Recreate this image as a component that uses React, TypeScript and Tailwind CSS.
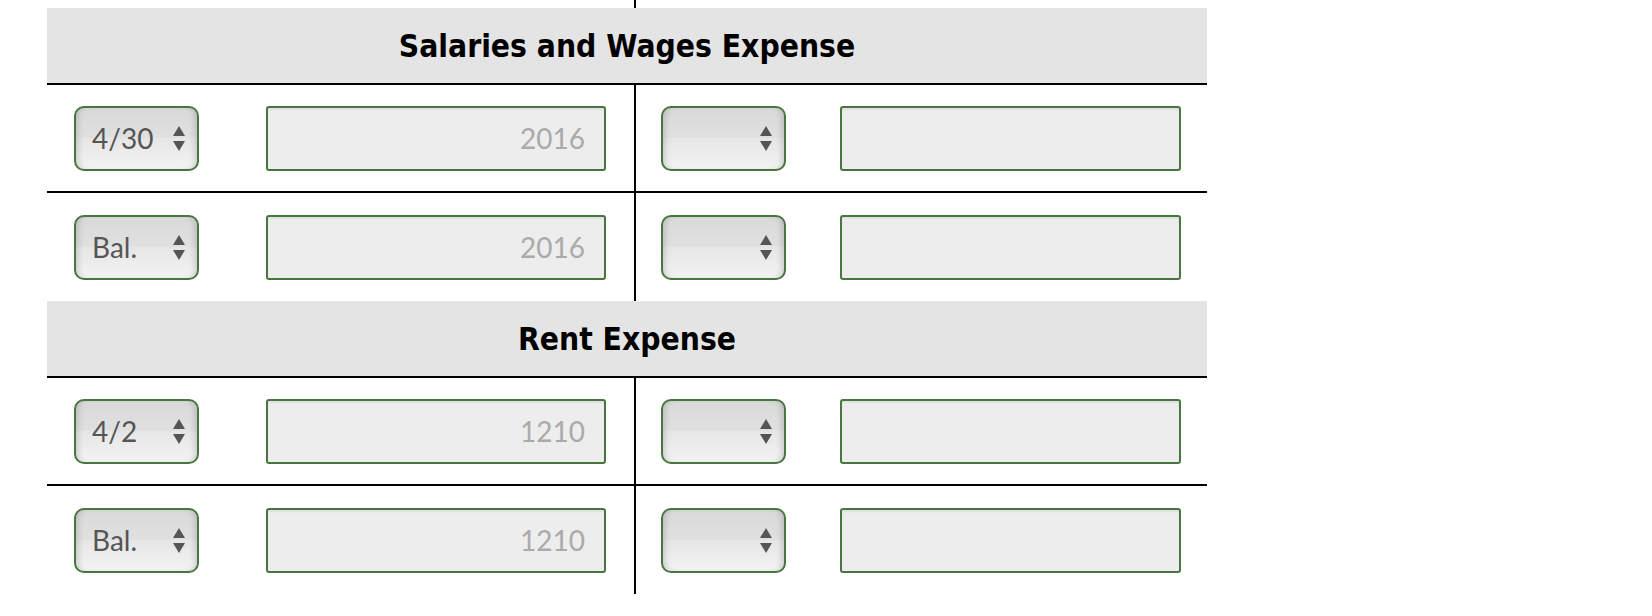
import React from 'react'

type Row = { date: string; amount: string }

const accounts: { title: string; rows: Row[] }[] = [
  {
    title: 'Salaries and Wages Expense',
    rows: [
      { date: '4/30', amount: '2016' },
      { date: 'Bal.', amount: '2016' },
    ],
  },
  {
    title: 'Rent Expense',
    rows: [
      { date: '4/2', amount: '1210' },
      { date: 'Bal.', amount: '1210' },
    ],
  },
]

function Arrows() {
  return (
    <svg width="12" height="25" viewBox="0 0 12 25" className="shrink-0">
      <polygon points="6,0 12,10 0,10" fill="#555" />
      <polygon points="0,15 12,15 6,25" fill="#555" />
    </svg>
  )
}

function DateSelect({ value }: { value: string }) {
  return (
    <div className="w-[125px] h-[65px] shrink-0 flex items-center justify-between pl-[16px] pr-[12px] rounded-[10px] border-2 border-[#48763f] bg-[linear-gradient(to_bottom,#d9d9d9_0%,#e0e0e0_48%,#e6e6e6_50%,#f3f3f3_100%)] shadow-[inset_6px_0_6px_-4px_rgba(0,0,0,0.16),inset_-6px_0_6px_-4px_rgba(0,0,0,0.16)]">
      <span className="text-[28px] leading-none text-[#555]">{value}</span>
      <Arrows />
    </div>
  )
}

function AmountInput({ value, width }: { value: string; width: string }) {
  return (
    <div
      className={`${width} h-[65px] shrink-0 flex items-center justify-end pr-[19px] rounded-[3px] border-2 border-[#48763f] bg-[#ededed] shadow-[inset_0_2px_2px_rgba(0,0,0,0.06)]`}
    >
      <span className="text-[28px] leading-none text-[#aaa]">{value}</span>
    </div>
  )
}

function Header({ title }: { title: string }) {
  return (
    <div className="h-[77px] bg-[#e4e4e4] border-b-2 border-black flex items-center justify-center pt-[2px]">
      <span
        className="text-[31.5px] font-bold text-black leading-none"
        style={{ fontFamily: '"DejaVu Sans Condensed", "DejaVu Sans", Verdana, sans-serif' }}
      >
        {title}
      </span>
    </div>
  )
}

export default function App() {
  return (
    <div className="w-[1652px] h-[616px] bg-white" style={{ fontFamily: 'Lato, "Open Sans", sans-serif' }}>
      <div className="ml-[47px] w-[1160px]">
        <div className="h-[8px] flex">
          <div className="w-[589px] border-r-2 border-black" />
        </div>
        {accounts.map((acc) => (
          <div key={acc.title}>
            <Header title={acc.title} />
            {acc.rows.map((r, i) => (
              <div
                key={i}
                className={`h-[108px] flex ${i === 0 ? 'border-b-2 border-black' : ''}`}
              >
                <div className="w-[589px] border-r-2 border-black flex items-center pl-[27px]">
                  <DateSelect value={r.date} />
                  <div className="w-[67px]" />
                  <AmountInput value={r.amount} width="w-[340px]" />
                </div>
                <div className="flex items-center pl-[25px]">
                  <DateSelect value="" />
                  <div className="w-[54px]" />
                  <AmountInput value="" width="w-[341px]" />
                </div>
              </div>
            ))}
          </div>
        ))}
      </div>
    </div>
  )
}
